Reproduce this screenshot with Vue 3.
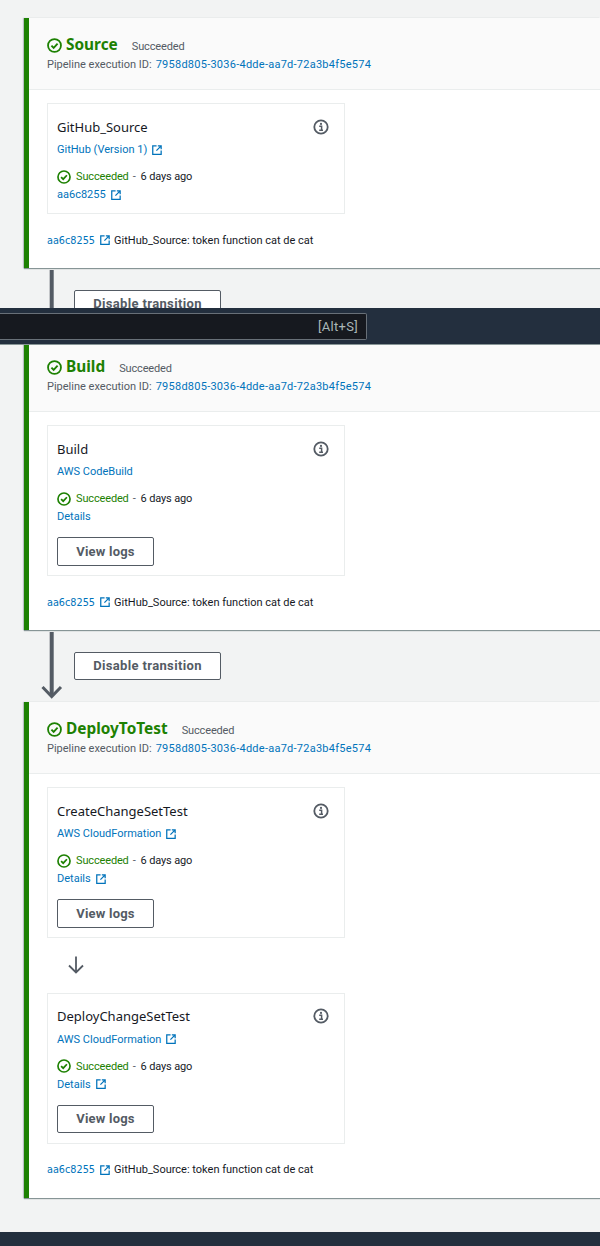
<script setup>
const commit = 'aa6c8255'
const execId = '7958d805-3036-4dde-aa7d-72a3b4f5e574'
const stages = [
  { name: 'Source', actions: [{ title: 'GitHub_Source', provider: 'GitHub (Version 1)', ext: true, link: 'aa6c8255', linkExt: true, logs: false }] },
  { name: 'Build', actions: [{ title: 'Build', provider: 'AWS CodeBuild', ext: false, link: 'Details', linkExt: false, logs: true }] },
  { name: 'DeployToTest', actions: [
    { title: 'CreateChangeSetTest', provider: 'AWS CloudFormation', ext: true, link: 'Details', linkExt: true, logs: true },
    { title: 'DeployChangeSetTest', provider: 'AWS CloudFormation', ext: true, link: 'Details', linkExt: true, logs: true }
  ] }
]
</script>

<template>
  <div class="page">
    <svg width="0" height="0" class="defs" aria-hidden="true">
      <symbol id="check" viewBox="0 0 16 16">
        <circle cx="8" cy="8" r="6.9" fill="none" stroke="currentColor" stroke-width="1.9" />
        <path d="M4.7 8.100l2.400 2.400 4.200-4.500" fill="none" stroke="currentColor" stroke-width="2" />
      </symbol>
      <symbol id="ext" viewBox="0 0 12 12">
        <path d="M5.500 1H.9v10.100H11V6.500" fill="none" stroke="currentColor" stroke-width="1.500" />
        <path d="M7 1h4v4M11 1L5.300 6.700" fill="none" stroke="currentColor" stroke-width="1.500" />
      </symbol>
    </svg>

    <template v-for="(stage, i) in stages" :key="stage.name">
      <div v-if="i > 0" class="transition">
        <svg class="t-arrow" width="24" height="68" viewBox="0 0 24 68">
          <path d="M11.700 0V64" stroke="#545b64" stroke-width="4" fill="none" />
          <path d="M2.500 55L11.700 64.500 21 55" stroke="#545b64" stroke-width="3" fill="none" />
        </svg>
        <div class="btn t-btn">Disable transition</div>
      </div>

      <section class="stage">
        <header class="stage-head">
          <div class="stage-title">
            <svg class="ic-16 green"><use href="#check" /></svg>
            <h2>{{ stage.name }}</h2>
            <span class="muted state">Succeeded</span>
          </div>
          <div class="exec">
            <span class="muted">Pipeline execution ID:</span>
            <a class="exec-id">{{ execId }}</a>
          </div>
        </header>

        <div class="stage-body">
          <template v-for="(a, j) in stage.actions" :key="a.title">
            <div v-if="j > 0" class="between">
              <svg width="16" height="18" viewBox="0 0 16 18">
                <path d="M8 .5V16.500M1 9.500L8 16.500l7-7" stroke="#545b64" stroke-width="1.800" fill="none" />
              </svg>
            </div>
            <article class="card">
              <div class="card-title">
                <span>{{ a.title }}</span>
                <svg class="info" width="16" height="16" viewBox="0 0 16 16">
                  <circle cx="8" cy="8" r="6.700" fill="none" stroke="#545b64" stroke-width="1.800" />
                  <circle cx="8" cy="4.900" r="1.100" fill="#545b64" />
                  <path d="M6.200 7.200H8.600V11M6.200 11.300H10" fill="none" stroke="#545b64" stroke-width="1.500" />
                </svg>
              </div>
              <div class="row provider">
                <a>{{ a.provider }}</a>
                <svg v-if="a.ext" class="ic-ext"><use href="#ext" /></svg>
              </div>
              <div class="row status">
                <svg class="ic-14 green"><use href="#check" /></svg>
                <span class="green">Succeeded</span>
                <span class="dash">-</span>
                <span>6 days ago</span>
              </div>
              <div class="row">
                <a>{{ a.link }}</a>
                <svg v-if="a.linkExt" class="ic-ext"><use href="#ext" /></svg>
              </div>
              <div v-if="a.logs" class="btn logs">View logs</div>
            </article>
          </template>

          <div class="commit">
            <a class="mono">{{ commit }}</a>
            <svg class="ic-ext"><use href="#ext" /></svg>
            <span>GitHub_Source: token function cat de cat</span>
          </div>
        </div>
      </section>
    </template>

    <div class="bottom-bar"></div>

    <div class="top-bar">
      <div class="search"><span>[Alt+S]</span></div>
    </div>
  </div>
</template>

<style>
html, body { margin: 0; background: #f2f3f3; }
</style>

<style scoped>
.page {
  position: relative;
  height: 1246px;
  overflow: hidden;
  background: #f2f3f3;
  padding-top: 17.5px;
  box-sizing: border-box;
  font-family: Roboto, "Noto Sans", sans-serif;
  font-size: 11px;
  color: #16191f;
}
.defs { position: absolute; }
.green { color: #1d8102; }
.muted { color: #545b64; }
a { color: #0073bb; }

.stage {
  margin-left: 24px;
  background: #fff;
  border-left: 5px solid #1d8102;
  box-shadow: 0 1px 1px #879596, -1px 0 1px rgba(0, 28, 36, .2);
}
.stage-head {
  box-sizing: border-box;
  height: 72px;
  padding: 17.5px 0 0 18px;
  background: #fafafa;
  border-bottom: 1px solid #eaeded;
}
.stage-title { display: flex; align-items: center; height: 20px; }
.ic-16 { width: 15px; height: 15px; margin-right: 4px; }
h2 {
  margin: 0 14px 0 0;
  font-family: "Noto Sans", sans-serif;
  font-size: 15.4px;
  line-height: 20px;
  font-weight: 700;
  color: #1d8102;
}
.state { margin-top: 2px; letter-spacing: -.15px; }
.exec { display: flex; gap: 4px; margin-top: 2px; line-height: 16px; }
.exec-id { letter-spacing: .25px; }
.stage-body { padding: 13.500px 0 19px 18px; }

.card {
  box-sizing: border-box;
  width: 298px;
  padding: 12.500px 9px 9.500px;
  border: 1px solid #eaeded;
  background: #fff;
}
.card-title {
  display: flex;
  justify-content: space-between;
  align-items: center;
  height: 20px;
  padding-right: 6px;
  font-family: "Noto Sans", sans-serif;
  font-size: 13px;
}
.row { display: flex; align-items: center; height: 18px; }
.provider { margin-top: 4px; }
.status { margin-top: 9px; letter-spacing: -.15px; }
.ic-14 { width: 14px; height: 14px; margin-right: 5px; }
.dash { margin: 0 5px 0 4px; color: #545b64; }
.ic-ext { width: 10px; height: 10px; margin-left: 5px; color: #0073bb; }

.btn {
  box-sizing: border-box;
  display: flex;
  align-items: center;
  justify-content: center;
  background: #fff;
  border: 1px solid #545b64;
  border-radius: 2px;
  font-size: 13px;
  font-weight: 700;
  color: #545b64;
}
.logs { width: 97px; height: 28.500px; margin-top: 11.500px; letter-spacing: .2px; }

.between { height: 54.5px; display: flex; align-items: center; padding-left: 21px; }
.commit { display: flex; align-items: center; height: 18px; margin-top: 17px; }
.commit .ic-ext { margin: 0 4px 0 5px; }
.mono { font-family: "DejaVu Sans", sans-serif; font-size: 9.700px; }

.transition { display: flex; height: 71.500px; padding-left: 40px; }
.t-arrow { margin-top: 2px; }
.t-btn { width: 147px; height: 27.500px; margin: 22px 0 0 10px; letter-spacing: .35px; }

.bottom-bar { height: 40px; margin-top: 34.5px; background: #232f3e; }

.top-bar {
  position: absolute;
  top: 308px;
  left: 0;
  right: 0;
  height: 37px;
  box-sizing: border-box;
  background: #232f3e;
  border-bottom: 1px solid #879596;
}
.search {
  box-sizing: border-box;
  width: 367px;
  height: 27px;
  margin-top: 5px;
  padding-right: 8px;
  display: flex;
  align-items: center;
  justify-content: flex-end;
  background: #16191f;
  border: 1px solid #687078;
  border-left: 0;
  border-radius: 0 2px 2px 0;
  font-size: 13px;
  letter-spacing: .3px;
  color: #aab7b8;
}
</style>
